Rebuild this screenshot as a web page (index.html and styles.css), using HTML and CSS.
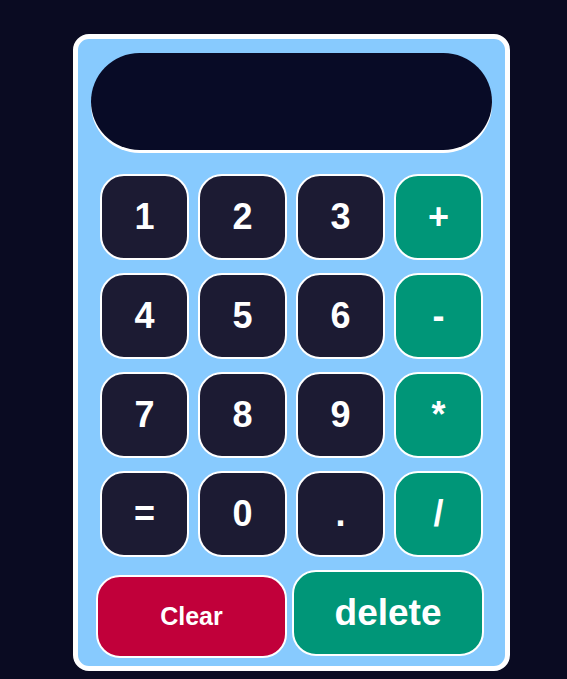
FILE: index.html
```html
<!DOCTYPE html>
<html lang="en">
<head>
  <meta charset="UTF-8" />
  <meta name="viewport" content="width=device-width, initial-scale=1.0"/>
  <title>Calculator</title>
  <link rel="stylesheet" href="styles.css">
</head>
<body>

  <div class="calculator">
    <input type="text" class="display" id="display" readonly />

    <div class="keys">
      <button class="key">1</button>
      <button class="key">2</button>
      <button class="key">3</button>
      <button class="key op">+</button>

      <button class="key">4</button>
      <button class="key">5</button>
      <button class="key">6</button>
      <button class="key op">-</button>

      <button class="key">7</button>
      <button class="key">8</button>
      <button class="key">9</button>
      <button class="key op">*</button>

      <button class="key">=</button>
      <button class="key">0</button>
      <button class="key">.</button>
      <button class="key op">/</button>
    </div>

    <div class="actions">
      <button class="btn-clear">Clear</button>
      <button class="btn-delete">delete</button>
    </div>
  </div>

</body>
</html>
```

FILE: styles.css
```css
* {
  box-sizing: border-box;
}

body {
  margin: 0;
  padding: 34px 0 0 73px;
  background: #0a0b22;
  font-family: "Liberation Sans", Arial, sans-serif;
  height: 100vh;
}

.calculator {
  width: 437px;
  height: 637px;
  background: #87cafe;
  border: 5px solid #fff;
  border-radius: 16px;
  padding: 14px 14px 0 13px;
}

.display {
  display: block;
  width: 401px;
  height: 97px;
  border: none;
  border-radius: 49px;
  background: #080b26;
  box-shadow: 0 3px 0 #fff;
  outline: none;
}

.keys {
  display: grid;
  grid-template-columns: repeat(4, 89px);
  grid-auto-rows: 86px;
  column-gap: 9px;
  row-gap: 13px;
  margin: 24px 0 0 9px;
}

.key {
  background: #1c1b33;
  border: 2px solid #fff;
  border-radius: 24px;
  color: #fff;
  font-family: inherit;
  font-size: 36px;
  font-weight: bold;
  cursor: pointer;
}

.key.op {
  background: #009678;
}

.actions {
  display: flex;
  align-items: baseline;
  gap: 5px;
  margin: 13px 0 0 5px;
}

.btn-clear,
.btn-delete {
  border: 2px solid #fff;
  color: #fff;
  font-family: inherit;
  font-weight: bold;
  cursor: pointer;
}

.btn-clear {
  width: 191px;
  height: 83px;
  background: #c1003a;
  border-radius: 24px;
  font-size: 25px;
}

.btn-delete {
  width: 192px;
  height: 86px;
  background: #009678;
  border-radius: 24px;
  font-size: 37px;
}
```
